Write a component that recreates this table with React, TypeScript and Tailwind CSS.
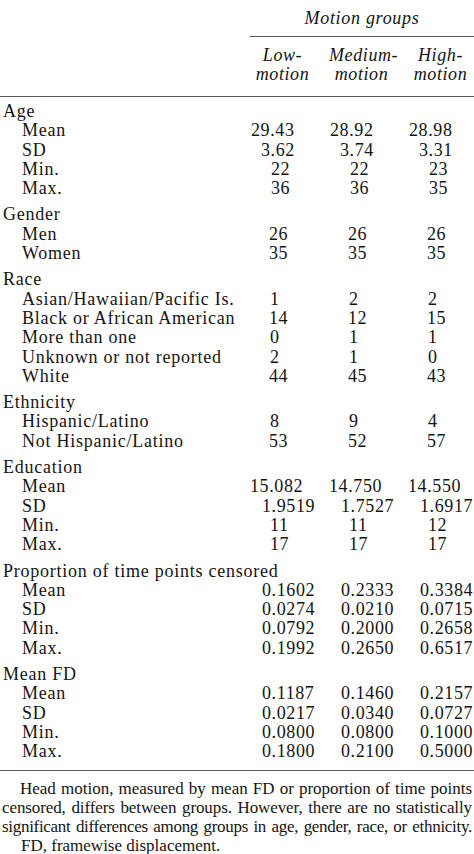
type Row = { label: string; values: string[]; pad: string };
type Group = { label: string; rows: Row[] };

const groups: Group[] = [
  {
    label: 'Age',
    rows: [
      { label: 'Mean', values: ['29.43', '28.92', '28.98'], pad: 'pl-[1px]' },
      { label: 'SD', values: ['3.62', '3.74', '3.31'], pad: 'pl-[11px]' },
      { label: 'Min.', values: ['22', '22', '23'], pad: 'pl-[21px]' },
      { label: 'Max.', values: ['36', '36', '35'], pad: 'pl-[21px]' },
    ],
  },
  {
    label: 'Gender',
    rows: [
      { label: 'Men', values: ['26', '26', '26'], pad: 'pl-[19px]' },
      { label: 'Women', values: ['35', '35', '35'], pad: 'pl-[19px]' },
    ],
  },
  {
    label: 'Race',
    rows: [
      { label: 'Asian/Hawaiian/Pacific Is.', values: ['1', '2', '2'], pad: 'pl-[20px]' },
      { label: 'Black or African American', values: ['14', '12', '15'], pad: 'pl-[19px]' },
      { label: 'More than one', values: ['0', '1', '1'], pad: 'pl-[20px]' },
      { label: 'Unknown or not reported', values: ['2', '1', '0'], pad: 'pl-[20px]' },
      { label: 'White', values: ['44', '45', '43'], pad: 'pl-[19px]' },
    ],
  },
  {
    label: 'Ethnicity',
    rows: [
      { label: 'Hispanic/Latino', values: ['8', '9', '4'], pad: 'pl-[20px]' },
      { label: 'Not Hispanic/Latino', values: ['53', '52', '57'], pad: 'pl-[19px]' },
    ],
  },
  {
    label: 'Education',
    rows: [
      { label: 'Mean', values: ['15.082', '14.750', '14.550'], pad: 'pl-0' },
      { label: 'SD', values: ['1.9519', '1.7527', '1.6917'], pad: 'pl-[12px]' },
      { label: 'Min.', values: ['11', '11', '12'], pad: 'pl-[20px]' },
      { label: 'Max.', values: ['17', '17', '17'], pad: 'pl-[20px]' },
    ],
  },
  {
    label: 'Proportion of time points censored',
    rows: [
      { label: 'Mean', values: ['0.1602', '0.2333', '0.3384'], pad: 'pl-[12px]' },
      { label: 'SD', values: ['0.0274', '0.0210', '0.0715'], pad: 'pl-[12px]' },
      { label: 'Min.', values: ['0.0792', '0.2000', '0.2658'], pad: 'pl-[12px]' },
      { label: 'Max.', values: ['0.1992', '0.2650', '0.6517'], pad: 'pl-[12px]' },
    ],
  },
  {
    label: 'Mean FD',
    rows: [
      { label: 'Mean', values: ['0.1187', '0.1460', '0.2157'], pad: 'pl-[12px]' },
      { label: 'SD', values: ['0.0217', '0.0340', '0.0727'], pad: 'pl-[12px]' },
      { label: 'Min.', values: ['0.0800', '0.0800', '0.1000'], pad: 'pl-[12px]' },
      { label: 'Max.', values: ['0.1800', '0.2100', '0.5000'], pad: 'pl-[12px]' },
    ],
  },
];

function DataRow({ row }: { row: Row }) {
  return (
    <div className="grid grid-cols-[250px_79px_79px_79px] leading-[19.3px] whitespace-nowrap">
      <div className="pl-[22px] tracking-[0.75px]">{row.label}</div>
      {row.values.map((v, i) => (
        <div key={i} className={row.pad}>
          {v}
        </div>
      ))}
    </div>
  );
}

export default function App() {
  return (
    <div className="font-['Liberation_Serif','Times_New_Roman',serif] w-[474px] h-[854px] overflow-hidden bg-white text-[#141414]">
      {/* header */}
      <div className="grid grid-cols-[250px_224px] pt-[9px]">
        <div />
        <div className="flex flex-col">
          <div className="text-center italic text-[18px] tracking-[0.7px] leading-[19px]">
            Motion groups
          </div>
          <div className="mt-[8px] h-px bg-[#5a5a5a]" />
        </div>
      </div>
      <div className="grid grid-cols-[250px_79px_79px_79px] pt-[9px] italic text-[18px] tracking-[0.6px] leading-[19px]">
        <div />
        <div className="text-center pr-[14px]">
          Low-
          <br />
          motion
        </div>
        <div className="text-center pr-[14px]">
          Medium-
          <br />
          motion
        </div>
        <div className="text-center pr-[14px]">
          High-
          <br />
          motion
        </div>
      </div>
      <div className="mt-[12px] h-px bg-[#5a5a5a]" />

      {/* body */}
      <div className="pt-[5px] pb-[8px] text-[18px] tracking-[0.6px]">
        {groups.map((g, gi) => (
          <div key={g.label} className={gi > 0 ? 'mt-[7px]' : ''}>
            <div className="pl-[3px] leading-[19.3px] tracking-[0.75px] whitespace-nowrap">{g.label}</div>
            {g.rows.map((r) => (
              <DataRow key={g.label + r.label} row={r} />
            ))}
          </div>
        ))}
      </div>
      <div className="h-px bg-[#5a5a5a]" />

      {/* note */}
      <div className="pt-[8px] pl-[2px] pr-[2px] text-[17px] leading-[19px]">
        <div className="text-justify [text-align-last:justify] pl-[18px] whitespace-nowrap">
          Head motion, measured by mean FD or proportion of time points
        </div>
        <div className="text-justify [text-align-last:justify] whitespace-nowrap tracking-[-0.1px]">
          censored, differs between groups. However, there are no statistically
        </div>
        <div className="text-justify [text-align-last:justify] whitespace-nowrap tracking-[-0.3px]">
          significant differences among groups in age, gender, race, or ethnicity.
        </div>
        <div className="pl-[19px]">FD, framewise displacement.</div>
      </div>
    </div>
  );
}
